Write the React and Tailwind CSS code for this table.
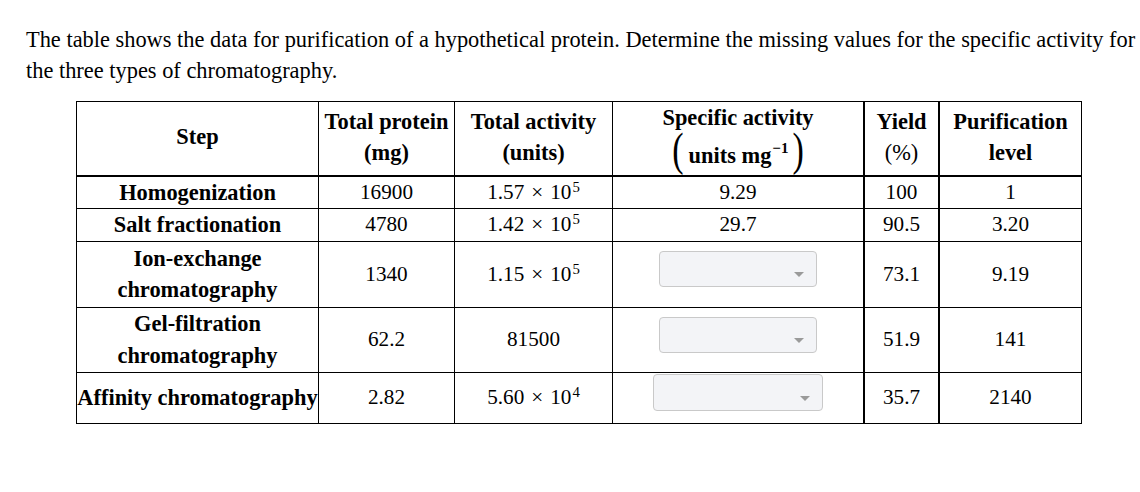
import React from "react";

function Sci({ m, e }) {
  return (
    <span className="text-[21.2px] leading-[31.4px] whitespace-nowrap">
      {m}
      <span className="mx-[7px]">×</span>
      10
      <span className="text-[14.8px] leading-none align-[7px] ml-[1px]">{e}</span>
    </span>
  );
}

function Num({ children }) {
  return <span className="text-[21.2px] leading-[31.4px]">{children}</span>;
}

function Dropdown({ wide }) {
  return (
    <div
      className={
        (wide ? "w-[170px] h-[37px] " : "w-[158px] h-[36px] ") +
        "mb-[10px] flex items-end justify-end pr-[12px] pb-[9px] rounded-[4px] border border-[#c9c9c9] bg-[#f3f4f7]"
      }
    >
      <div className="w-0 h-0 border-x-[5px] border-x-transparent border-t-[5px] border-t-[#9a9a9a]" />
    </div>
  );
}

const cell = "flex flex-col items-center justify-center text-center";

function Row({ h, border, cells }) {
  return (
    <div className={"flex " + h + " " + border}>
      <div className={cell + " w-[241px] font-bold text-[22.4px] leading-[31.4px]"}>{cells[0]}</div>
      <div className={cell + " w-[136px] border-l border-black"}>{cells[1]}</div>
      <div className={cell + " w-[158px] border-l border-black"}>{cells[2]}</div>
      <div className={cell + " w-[251px] border-l border-black"}>{cells[3]}</div>
      <div className={cell + " w-[75px] border-l-2 border-black"}>{cells[4]}</div>
      <div className={cell + " w-[143px] border-l-2 border-black"}>{cells[5]}</div>
    </div>
  );
}

export default function App() {
  return (
    <div className="font-['Liberation_Serif',serif] text-black bg-white w-[1140px] h-[492px]">
      <p className="pt-[24px] pl-[26px] text-[22.4px] leading-[31.4px]">
        The table shows the data for purification of a hypothetical protein. Determine the missing values for the specific activity for the three types of chromatography.
      </p>
      <div className="mt-[14px] ml-[76px] w-[1006px] border border-black">
        {/* header */}
        <div className="flex h-[75px] border-b-2 border-black font-bold text-[22.4px] leading-[31px]">
          <div className={cell + " w-[241px] pb-[4px]"}>Step</div>
          <div className={cell + " w-[136px] border-l border-black pb-[3px]"}>
            <div>Total protein</div>
            <div>(mg)</div>
          </div>
          <div className={cell + " w-[158px] border-l border-black pb-[3px]"}>
            <div>Total activity</div>
            <div>(units)</div>
          </div>
          <div className="flex flex-col items-center justify-start text-center w-[251px] border-l border-black">
            <div>Specific activity</div>
            <div className="flex items-baseline mt-[2px]">
              <span className="inline-block text-[34px] leading-none font-normal scale-y-[1.35] -translate-y-[2px] mr-[5px]">(</span>
              <span>
                units mg
                <span className="text-[15px] leading-none align-[10px] ml-[1px]">−1</span>
              </span>
              <span className="inline-block text-[34px] leading-none font-normal scale-y-[1.35] -translate-y-[2px] ml-[4px]">)</span>
            </div>
          </div>
          <div className={cell + " w-[75px] border-l-2 border-black pb-[3px]"}>
            <div>Yield</div>
            <div className="font-normal">(%)</div>
          </div>
          <div className={cell + " w-[143px] border-l-2 border-black pb-[3px]"}>
            <div>Purification</div>
            <div>level</div>
          </div>
        </div>

        <Row
          h="h-[32px]"
          border="border-b border-black"
          cells={["Homogenization", <Num>16900</Num>, <Sci m="1.57" e="5" />, <Num>9.29</Num>, <Num>100</Num>, <Num>1</Num>]}
        />
        <Row
          h="h-[33px]"
          border="border-b border-black"
          cells={["Salt fractionation", <Num>4780</Num>, <Sci m="1.42" e="5" />, <Num>29.7</Num>, <Num>90.5</Num>, <Num>3.20</Num>]}
        />
        <Row
          h="h-[66px]"
          border="border-b border-black"
          cells={[
            <>
              <div>Ion-exchange</div>
              <div>chromatography</div>
            </>,
            <Num>1340</Num>,
            <Sci m="1.15" e="5" />,
            <Dropdown />,
            <Num>73.1</Num>,
            <Num>9.19</Num>,
          ]}
        />
        <Row
          h="h-[65px]"
          border="border-b border-black"
          cells={[
            <>
              <div>Gel-filtration</div>
              <div>chromatography</div>
            </>,
            <Num>62.2</Num>,
            <Num>81500</Num>,
            <Dropdown />,
            <Num>51.9</Num>,
            <Num>141</Num>,
          ]}
        />
        <Row
          h="h-[50px]"
          border=""
          cells={[
            <span className="whitespace-nowrap">Affinity chromatography</span>,
            <Num>2.82</Num>,
            <Sci m="5.60" e="4" />,
            <Dropdown wide />,
            <Num>35.7</Num>,
            <Num>2140</Num>,
          ]}
        />
      </div>
    </div>
  );
}
